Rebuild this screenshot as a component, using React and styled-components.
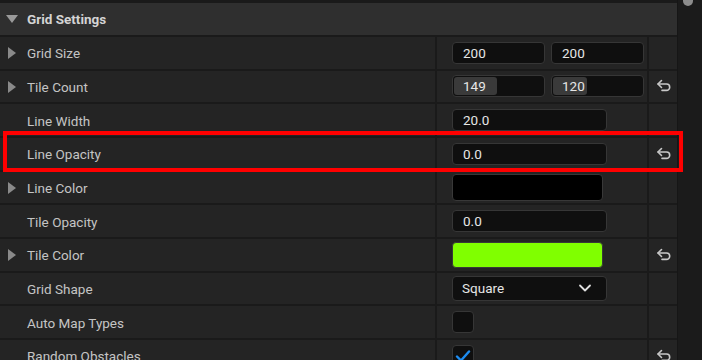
import React from 'react';
import styled, { createGlobalStyle } from 'styled-components';

const GlobalStyle = createGlobalStyle`
  html, body {
    margin: 0;
    padding: 0;
    background: #1a1a1a;
    overflow: hidden;
  }
  body {
    font-family: Roboto, "Liberation Sans", sans-serif;
  }
`;

const Page = styled.div`
  display: flex;
  width: 702px;
  height: 360px;
  overflow: hidden;
  background: #1a1a1a;
`;

const Panel = styled.div`
  position: relative;
  z-index: 1;
  width: 677px;
  display: flex;
  flex-direction: column;
  padding-top: 3px;
`;

const ScrollTrack = styled.div`
  position: relative;
  flex: 1;
  background: #1b1b1b;
  border-left: 1px solid #161616;
`;

const ScrollThumb = styled.div`
  position: absolute;
  left: 5px;
  top: -6px;
  width: 10px;
  height: 12px;
  border-radius: 5px;
  background: #8c8c8c;
`;

const Header = styled.div`
  display: flex;
  align-items: center;
  height: 32px;
  background: #2f2f2f;
  border-bottom: 2px solid #1a1a1a;
  color: #d4d4d4;
  font-size: 13.5px;
  font-weight: 700;
  flex-shrink: 0;
`;

const Row = styled.div`
  position: relative;
  display: grid;
  grid-template-columns: 437px 212px 28px;
  height: 33.67px;
  box-sizing: border-box;
  border-bottom: 2px solid #1a1a1a;
  background: #242424;
  flex-shrink: 0;
`;

const LabelCell = styled.div`
  display: flex;
  align-items: center;
  padding-top: 1px;
  border-right: 2px solid #1a1a1a;
  color: #c4c4c4;
  font-size: 13.5px;
`;

const Arrow = styled.span`
  width: 27px;
  display: flex;
  align-items: center;
  padding-left: ${p => p.$pad || 8}px;
  box-sizing: border-box;
`;

const ValueCell = styled.div`
  display: flex;
  align-items: center;
  gap: 6px;
  padding-left: 15px;
  border-right: 2px solid #1a1a1a;
`;

const ResetCell = styled.div`
  display: flex;
  align-items: center;
  justify-content: center;
  padding-left: 1px;
`;

const Field = styled.div`
  position: relative;
  display: flex;
  align-items: center;
  justify-content: space-between;
  width: ${p => p.$w}px;
  height: ${p => p.$h || 22}px;
  box-sizing: border-box;
  padding: 0 0 0 ${p => p.$pad || 10}px;
  background: #0f0f0f;
  border: 1px solid #363636;
  border-radius: 4px;
  color: #e6e6e6;
  font-size: 13.5px;
  overflow: hidden;
`;

const Fill = styled.div`
  position: absolute;
  left: 1px;
  top: 1px;
  bottom: 1px;
  border-radius: 3px;
  background: #3a3a3a;
`;

const FieldText = styled.span`
  position: relative;
`;

const Swatch = styled.div`
  width: ${p => p.$w}px;
  height: ${p => p.$h}px;
  box-sizing: border-box;
  background: ${p => p.$color};
  border: 1px solid #383838;
  border-radius: 4px;
`;

const Check = styled.div`
  width: 22px;
  height: 22px;
  box-sizing: border-box;
  background: #0f0f0f;
  border: 1px solid #363636;
  border-radius: 4px;
  display: flex;
  align-items: center;
  justify-content: center;
`;

const Highlight = styled.div`
  position: absolute;
  z-index: 2;
  left: 3px;
  right: -6px;
  top: -7px;
  bottom: -2px;
  border: 4px solid #ff0000;
  pointer-events: none;
`;

const RightTri = () => (
  <svg width="8" height="12" viewBox="0 0 8 12">
    <path d="M0 0 L8 6 L0 12 Z" fill="#8a8a8a" />
  </svg>
);

const DownTri = () => (
  <svg width="12" height="8" viewBox="0 0 12 8">
    <path d="M0 0 H12 L6 8 Z" fill="#9a9a9a" />
  </svg>
);

const ResetIcon = () => (
  <svg width="16" height="14" viewBox="0 0 16 14" fill="none" stroke="#c8c8c8" strokeWidth="1.6" strokeLinecap="round" strokeLinejoin="round">
    <path d="M5.5 1.5 L2 5 L5.5 8.5" />
    <path d="M2 5 H10.5 a3.2 3.2 0 0 1 0 6.4 H6" />
  </svg>
);

const Chevron = () => (
  <svg width="14" height="10" viewBox="0 0 14 10" fill="none" stroke="#e0e0e0" strokeWidth="1.8" strokeLinecap="round" strokeLinejoin="round">
    <path d="M2 2.5 L7 7.5 L12 2.5" />
  </svg>
);

const Tick = () => (
  <svg width="16" height="14" viewBox="0 0 16 14" fill="none" stroke="#1d8cf0" strokeWidth="2.4" strokeLinecap="round" strokeLinejoin="round">
    <path d="M2 7.5 L6 11.5 L14 2.5" />
  </svg>
);

const Prop = ({ label, expandable, reset, children, highlight }) => (
  <Row>
    <LabelCell>
      <Arrow>{expandable && <RightTri />}</Arrow>
      {label}
    </LabelCell>
    <ValueCell>{children}</ValueCell>
    <ResetCell>{reset && <ResetIcon />}</ResetCell>
    {highlight && <Highlight />}
  </Row>
);

export default function App() {
  return (
    <Page>
      <GlobalStyle />
      <Panel>
        <Header>
          <Arrow $pad={6}><DownTri /></Arrow>
          Grid Settings
        </Header>
        <Prop label="Grid Size" expandable>
          <Field $w={93}>200</Field>
          <Field $w={93}>200</Field>
        </Prop>
        <Prop label="Tile Count" expandable reset>
          <Field $w={93}>
            <Fill style={{ width: 43 }} />
            <FieldText>149</FieldText>
          </Field>
          <Field $w={93}>
            <Fill style={{ width: 34 }} />
            <FieldText>120</FieldText>
          </Field>
        </Prop>
        <Prop label="Line Width">
          <Field $w={155}>20.0</Field>
        </Prop>
        <Prop label="Line Opacity" reset highlight>
          <Field $w={155}>0.0</Field>
        </Prop>
        <Prop label="Line Color" expandable>
          <Swatch $w={151} $h={27} $color="#000000" />
        </Prop>
        <Prop label="Tile Opacity">
          <Field $w={155}>0.0</Field>
        </Prop>
        <Prop label="Tile Color" expandable reset>
          <Swatch $w={151} $h={26} $color="#80ff00" />
        </Prop>
        <Prop label="Grid Shape">
          <Field $w={155} $h={25} $pad={9}>
            Square
            <span style={{ paddingRight: 14, display: 'flex' }}><Chevron /></span>
          </Field>
        </Prop>
        <Prop label="Auto Map Types">
          <Check />
        </Prop>
        <Prop label="Random Obstacles" reset>
          <Check><Tick /></Check>
        </Prop>
      </Panel>
      <ScrollTrack>
        <ScrollThumb />
      </ScrollTrack>
    </Page>
  );
}
